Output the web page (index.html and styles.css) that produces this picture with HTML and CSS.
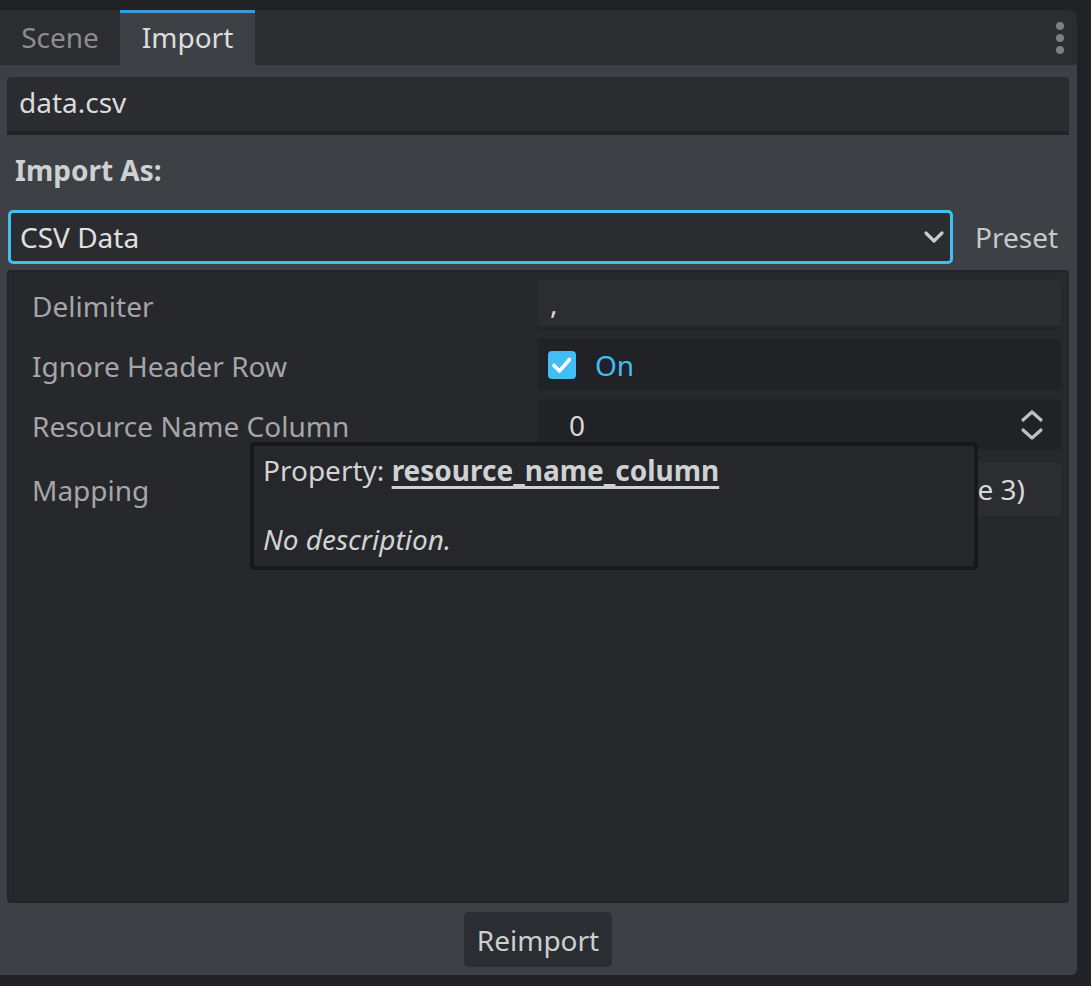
FILE: index.html
```html
<!DOCTYPE html>
<html>
<head>
<meta charset="utf-8">
<link rel="stylesheet" href="styles.css">
</head>
<body>
<div class="dock">
  <div class="tabbar">
    <div class="tab">Scene</div>
    <div class="tab active">Import</div>
    <div class="spacer"></div>
    <div class="menu"><span></span><span></span><span></span></div>
  </div>
  <div class="panel">
    <div class="filename">data.csv</div>
    <div class="import-as">Import As:</div>
    <div class="type-row">
      <div class="dropdown">
        <span>CSV Data</span>
        <svg class="chev" width="22" height="14" viewBox="0 0 22 14"><path d="M3 3 L11 11 L19 3" fill="none" stroke="#c9cacb" stroke-width="3.2" stroke-linecap="round" stroke-linejoin="round"/></svg>
      </div>
      <div class="preset">Preset</div>
    </div>
    <div class="inspector">
      <div class="prop">
        <div class="label">Delimiter</div>
        <div class="value line">,</div>
      </div>
      <div class="prop">
        <div class="label">Ignore Header Row</div>
        <div class="value dark check">
          <span class="box"><svg width="28" height="28" viewBox="0 0 28 28"><path d="M6 14.5 L11.5 20 L21.5 8.5" fill="none" stroke="#ffffff" stroke-width="3.6" stroke-linecap="round" stroke-linejoin="round"/></svg></span>
          <span class="on">On</span>
        </div>
      </div>
      <div class="prop">
        <div class="label">Resource Name Column</div>
        <div class="value dark spin">
          <span class="num">0</span>
          <svg width="26" height="34" viewBox="0 0 26 34"><path d="M4 12 L13 4 L22 12" fill="none" stroke="#bfc0c1" stroke-width="3.2" stroke-linecap="round" stroke-linejoin="round"/><path d="M4 22 L13 30 L22 22" fill="none" stroke="#bfc0c1" stroke-width="3.2" stroke-linecap="round" stroke-linejoin="round"/></svg>
        </div>
      </div>
      <div class="prop mapping">
        <div class="label">Mapping</div>
        <div class="value dict">Dictionary (size 3)</div>
      </div>
      <div class="tooltip">
        <div class="tip-title">Property: <b>resource_name_column</b></div>
        <div class="tip-desc">No description.</div>
      </div>
    </div>
    <div class="footer">
      <div class="btn">Reimport</div>
    </div>
  </div>
</div>
</body>
</html>
```
FILE: styles.css
```css
html, body {
  margin: 0;
  padding: 0;
  background: #212226;
  width: 1091px;
  height: 986px;
  overflow: hidden;
  font-family: "Noto Sans", "Open Sans", sans-serif;
  font-size: 28px;
}
.dock {
  padding-top: 10px;
  width: 1077px;
}
.tabbar {
  display: flex;
  height: 55px;
  background: #2b2d31;
  border-top-right-radius: 8px;
  align-items: stretch;
}
.tab {
  display: flex;
  align-items: center;
  justify-content: center;
  color: #8c8d8f;
  width: 120px;
  padding-bottom: 2px;
}
.tab.active {
  background: #3d4146;
  color: #dddddd;
  border-top: 3px solid #3c9ad6;
  width: 135px;
  padding-bottom: 5px;
}
.spacer { flex: 1; }
.menu {
  display: flex;
  flex-direction: column;
  gap: 4px;
  justify-content: center;
  padding-right: 13px;
}
.menu span {
  width: 8px;
  height: 8px;
  border-radius: 50%;
  background: #7d7e81;
}
.panel {
  background: #3d4145;
  padding: 12px 8px 8px 7px;
  height: 890px;
  border-bottom-right-radius: 6px;
}
.filename {
  background: #2a2c30;
  border-bottom: 4px solid #222427;
  border-radius: 4px 4px 0 0;
  height: 54px;
  box-sizing: border-box;
  height: 58px;
  padding-bottom: 4px;
  color: #dadbdc;
  display: flex;
  align-items: center;
  padding-left: 12px;
}
.import-as {
  font-weight: bold;
  color: #cfd0d1;
  height: 74px;
  box-sizing: border-box;
  padding-bottom: 4px;
  display: flex;
  align-items: center;
  padding-left: 8px;
}
.type-row {
  display: flex;
  align-items: center;
  height: 55px;
}
.dropdown {
  width: 945px;
  height: 54px;
  box-sizing: border-box;
  margin-left: 1px;
  border: 3px solid #42bdf5;
  border-radius: 5px;
  background: #2a2c30;
  display: flex;
  align-items: center;
  justify-content: space-between;
  padding: 0 5px 0 9px;
  color: #e0e0e1;
}
.preset {
  color: #c8c9ca;
  margin-left: 22px;
}
.inspector {
  position: relative;
  margin-top: 6px;
  height: 633px;
  box-sizing: border-box;
  background: #26282c;
  border: 2px solid #222428;
  border-radius: 4px;
  padding: 7px 6px 0 23px;
  display: flex;
  flex-direction: column;
  gap: 9px;
}
.prop {
  display: flex;
  align-items: center;
  height: 51px;
}
.prop.mapping {
  margin-top: 3px;
  height: 54px;
}
.label {
  width: 506px;
  color: #a5a6a8;
  padding-bottom: 0;
  position: relative;
  top: 1px;
}
.value {
  flex: 1;
  height: 51px;
  box-sizing: border-box;
  border-radius: 4px;
  display: flex;
  align-items: center;
  color: #d8d9da;
}
.value.line {
  background: #2b2d31;
  border-bottom: 4px solid #222427;
  border-radius: 4px 4px 0 0;
  padding-left: 12px;
}
.value.dark {
  background: #212226;
}
.check { padding-left: 10px; }
.box {
  width: 28px;
  height: 28px;
  background: #42bdf5;
  border-radius: 4px;
  display: inline-flex;
}
.on {
  color: #43bdf5;
  margin-left: 19px;
}
.spin {
  justify-content: space-between;
  padding: 0 16px 0 31px;
}
.dict {
  background: #2b2d31;
  justify-content: flex-end;
  padding-right: 36px;
  height: 54px;
}
.tooltip {
  position: absolute;
  left: 241px;
  top: 170px;
  width: 728px;
  height: 128px;
  box-sizing: border-box;
  background: #25272b;
  border: 4px solid #17181a;
  border-radius: 4px;
  padding: 5px 9px;
  color: #d2d3d4;
}
.tip-title b {
  text-decoration: underline;
  text-decoration-thickness: 3px;
  text-underline-offset: 5px;
  color: #d0d1d2;
}
.tip-desc {
  font-style: italic;
  margin-top: 31px;
}
.footer {
  display: flex;
  justify-content: center;
  padding-top: 9px;
}
.btn {
  background: #2a2d31;
  border-radius: 5px;
  height: 55px;
  padding: 0 13px;
  display: flex;
  align-items: center;
  color: #cecfd0;
}
```
